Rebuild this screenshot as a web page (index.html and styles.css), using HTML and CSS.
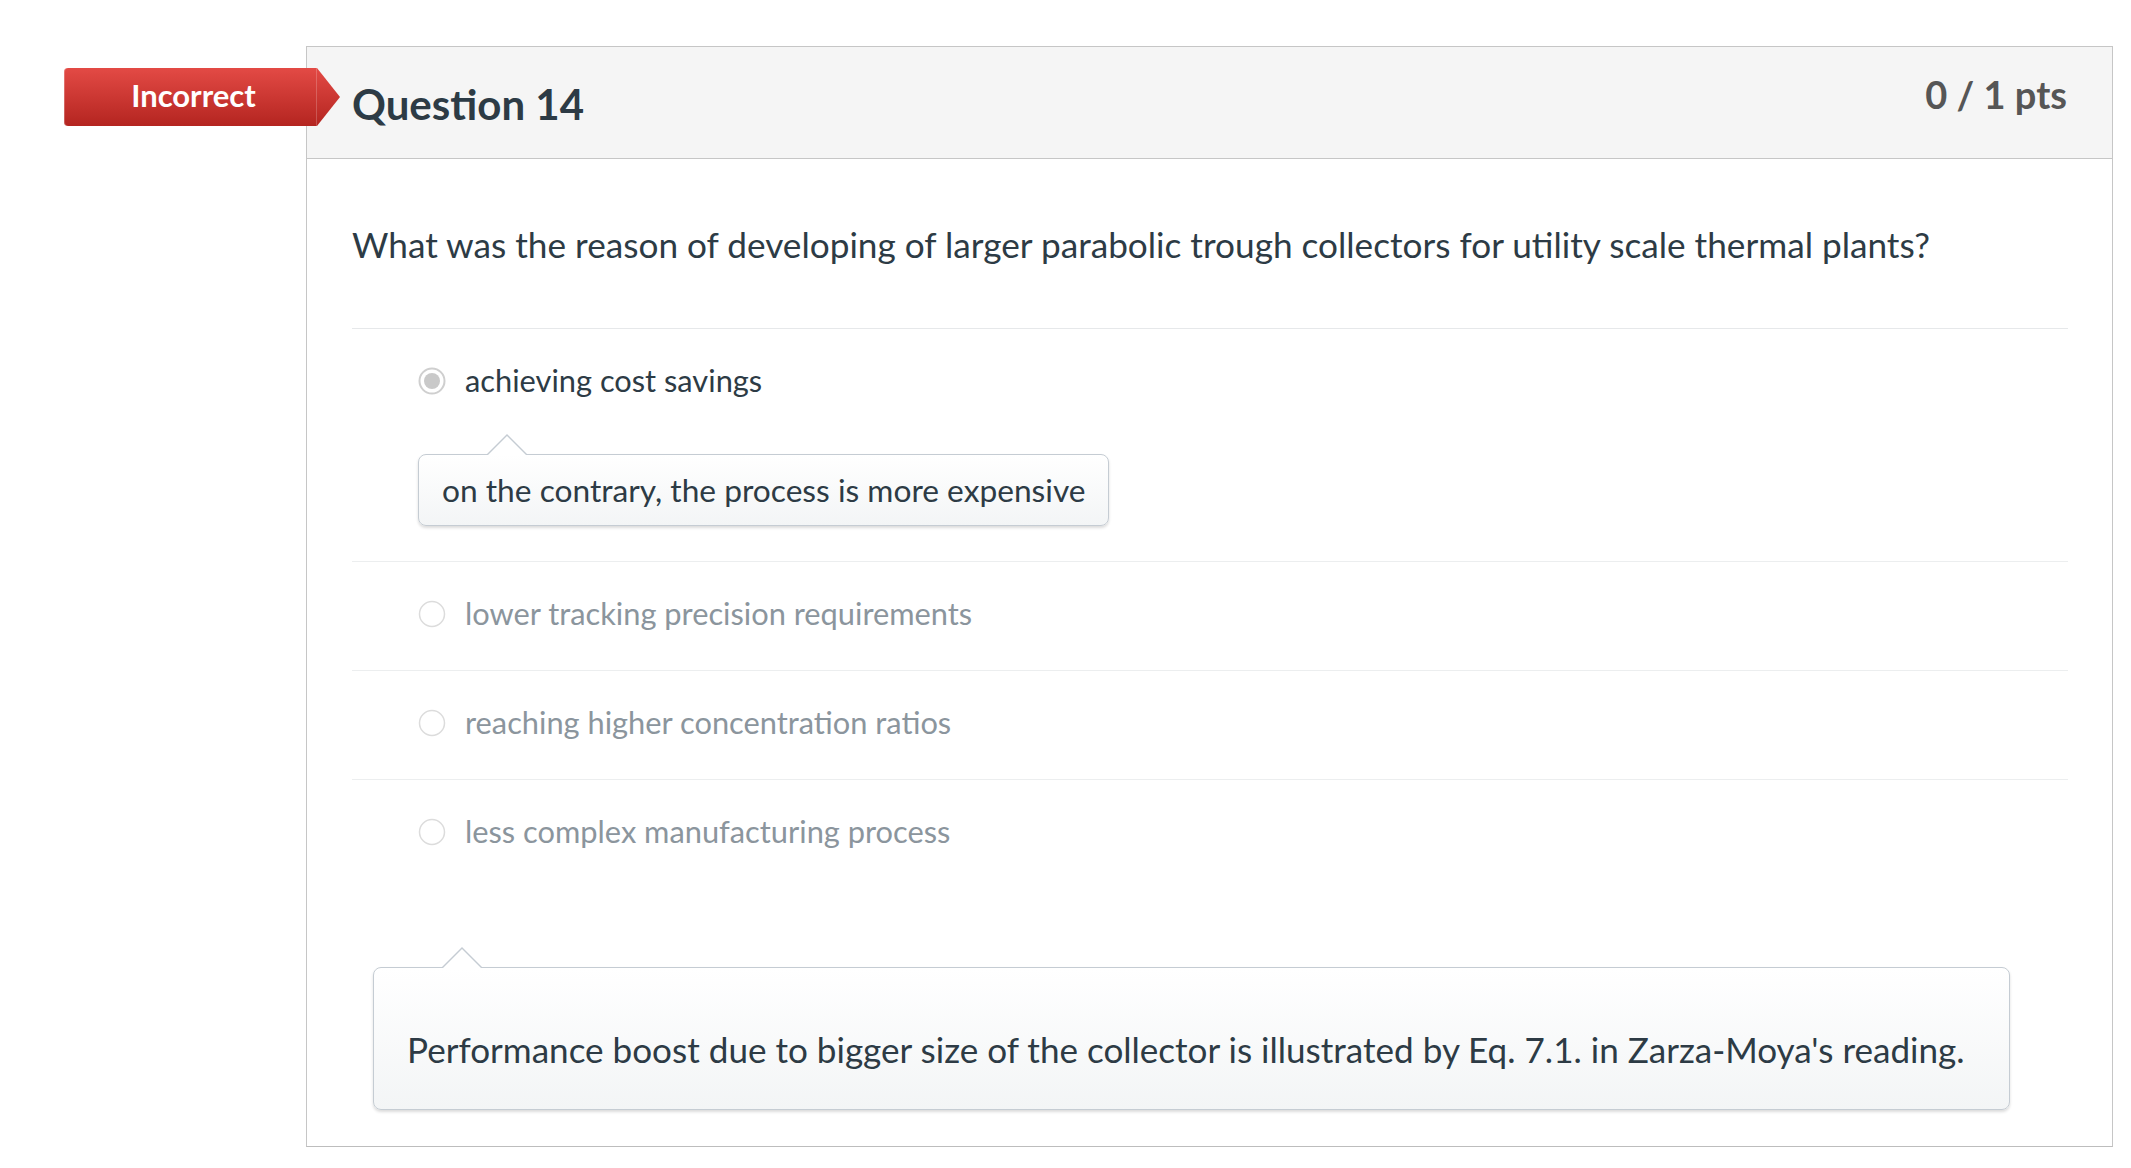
FILE: index.html
```html
<!DOCTYPE html>
<html lang="en">
<head>
<meta charset="utf-8">
<title>Question 14</title>
<link rel="stylesheet" href="styles.css">
</head>
<body>
<div class="page">
  <div class="badge"><span class="badge-text">Incorrect</span></div>
  <div class="card">
    <div class="card-header">
      <h2 class="title">Question 14</h2>
      <div class="points">0 / 1 pts</div>
    </div>
    <div class="card-body">
      <p class="question-text">What was the reason of developing of larger parabolic trough collectors for utility scale thermal plants?</p>
      <div class="answers">
        <div class="answer selected">
          <div class="option">
            <span class="radio"><svg viewBox="0 0 28 28" width="28" height="28"><circle cx="14" cy="14" r="12.5" fill="#fff" stroke="#cfcfcf" stroke-width="2"/><circle cx="14" cy="14" r="8" fill="#c9c9c9"/></svg></span>
            <span class="option-text">achieving cost savings</span>
          </div>
          <div class="comment small">on the contrary, the process is more expensive</div>
        </div>
        <div class="answer">
          <div class="option">
            <span class="radio"><svg viewBox="0 0 28 28" width="28" height="28"><circle cx="14" cy="14" r="12.5" fill="#fff" stroke="#dcdcdc" stroke-width="1.5"/></svg></span>
            <span class="option-text">lower tracking precision requirements</span>
          </div>
        </div>
        <div class="answer">
          <div class="option">
            <span class="radio"><svg viewBox="0 0 28 28" width="28" height="28"><circle cx="14" cy="14" r="12.5" fill="#fff" stroke="#dcdcdc" stroke-width="1.5"/></svg></span>
            <span class="option-text">reaching higher concentration ratios</span>
          </div>
        </div>
        <div class="answer">
          <div class="option">
            <span class="radio"><svg viewBox="0 0 28 28" width="28" height="28"><circle cx="14" cy="14" r="12.5" fill="#fff" stroke="#dcdcdc" stroke-width="1.5"/></svg></span>
            <span class="option-text">less complex manufacturing process</span>
          </div>
        </div>
      </div>
      <div class="comment big">Performance boost due to bigger size of the collector is illustrated by Eq. 7.1. in Zarza-Moya's reading.</div>
    </div>
  </div>
</div>
</body>
</html>
```

FILE: styles.css
```css
* { box-sizing: border-box; }
html, body { margin: 0; padding: 0; background: #fff; }
body { font-family: Lato, "Open Sans", "Liberation Sans", sans-serif; color: #2d3b45; }

.page {
  position: relative;
  padding: 46px 0 22px 306px;
}

.badge {
  position: absolute;
  left: 64px;
  top: 68px;
  width: 253px;
  height: 58px;
  background: linear-gradient(#e34a45, #b42520);
  border-radius: 4px 0 0 4px;
  box-shadow: inset 1px 0 0 rgba(255,255,255,0.25), inset -1px 0 0 rgba(255,255,255,0.2);
  display: flex;
  align-items: center;
  justify-content: center;
  z-index: 2;
}
.badge::after {
  content: "";
  position: absolute;
  left: 253px;
  top: 0;
  width: 23px;
  height: 58px;
  background: linear-gradient(#e34a45, #b42520);
  clip-path: polygon(0 0, 0 100%, 100% 50%);
}
.badge-text {
  color: #fff;
  font-weight: 700;
  font-size: 31px;
  line-height: 1;
  margin-top: -4px;
  margin-left: 6px;
}

.card {
  width: 1807px;
  border: 1px solid #c6c6c6;
  border-bottom-color: #bdbdbd;
}

.card-header {
  height: 112px;
  background: #f5f5f5;
  border-bottom: 1px solid #c6c6c6;
  display: flex;
  justify-content: space-between;
  align-items: flex-start;
  padding: 0 45px;
}
.title {
  margin: 32px 0 0;
  font-size: 42px;
  line-height: 50px;
  font-weight: 700;
  color: #2d3b45;
}
.points {
  margin-top: 24px;
  font-size: 38px;
  line-height: 46px;
  font-weight: 700;
  color: #565656;
}

.card-body {
  padding: 0 44px 36px 45px;
}
.question-text {
  margin: 0;
  padding: 61px 0 60px;
  font-size: 35.2px;
  line-height: 48px;
  border-bottom: 1px solid #e6e8ea;
}

.answer {
  padding: 31px 0 37px 66px;
  border-bottom: 1px solid #eceeef;
}
.answer:last-child { border-bottom: none; }
.answer.selected { padding-bottom: 35px; }

.option {
  display: flex;
  align-items: center;
  height: 40px;
  gap: 19px;
}
.radio { display: flex; width: 28px; height: 28px; margin-top: 2px; }
.radio svg { display: block; }
.option-text {
  font-size: 30.8px;
  color: #8b959d;
}
.selected .option-text { color: #2d3b45; }

.comment {
  position: relative;
  background: linear-gradient(#ffffff, #f3f5f6);
  border: 1px solid #c5ccd3;
  border-radius: 8px;
  box-shadow: 0 2px 3px rgba(0,0,0,0.14);
  color: #2d3b45;
}
.comment::before,
.comment::after {
  content: "";
  position: absolute;
  width: 0;
  height: 0;
  border-style: solid;
  border-color: transparent;
}
.comment::before {
  top: -21px;
  border-width: 0 21px 21px 21px;
  border-bottom-color: #c5ccd3;
}
.comment::after {
  top: -19px;
  border-width: 0 20px 20px 20px;
  border-bottom-color: #ffffff;
}

.comment.small {
  display: inline-block;
  margin-top: 54px;
  padding: 12px 22px 12px 23px;
  font-size: 31.7px;
  line-height: 46px;
}
.comment.small::before { left: 67px; }
.comment.small::after { left: 68px; }

.comment.big {
  margin: 79px 58px 0 21px;
  padding: 58px 20px 37px 33px;
  font-size: 35.1px;
  line-height: 46px;
}
.comment.big::before { left: 67px; }
.comment.big::after { left: 68px; }
```
